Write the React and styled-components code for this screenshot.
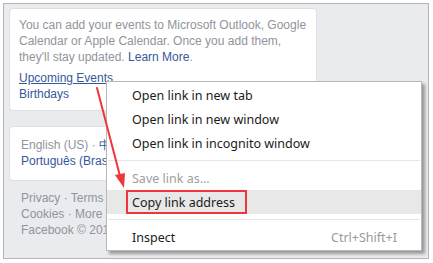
import React from "react";
import styled, { createGlobalStyle } from "styled-components";

const Global = createGlobalStyle`
  html, body { margin: 0; padding: 0; background: #ffffff; }
  body { font-family: "Liberation Sans", Arial, sans-serif; }
`;

const Frame = styled.div`
  position: relative;
  margin: 3px 0 0 3px;
  width: 419px;
  height: 250px;
  border: 1px solid #b4b4b4;
  background: #e9ebee;
  padding: 4px 0 0 5px;
  box-sizing: content-box;
  overflow: hidden;
  display: flex;
  flex-direction: column;
  align-items: flex-start;
`;

const Card = styled.div`
  width: 308px;
  box-sizing: border-box;
  background: #fff;
  border: 1px solid #dddfe2;
  border-radius: 4px;
  padding: ${(p) => p.$pad};
  margin-bottom: ${(p) => p.$mb || "0"};
  font-size: 12px;
  line-height: 16px;
  color: #90949c;
`;

const Para = styled.p`
  margin: 0 0 5px 0;
`;

const Link = styled.a`
  color: #365899;
  text-decoration: ${(p) => (p.$underline ? "underline" : "none")};
  display: ${(p) => (p.$block ? "block" : "inline")};
`;

const Footer = styled.div`
  padding-left: 12px;
  font-size: 12px;
  line-height: 16px;
  color: #90949c;
`;

const Menu = styled.div`
  position: absolute;
  left: 102px;
  top: 77px;
  width: 316px;
  box-sizing: border-box;
  background: #fff;
  border: 1px solid #b8b8b8;
  box-shadow: 3px 3px 3px rgba(0, 0, 0, 0.35);
  padding: 1px 0 1px 0;
  font-family: "Noto Sans", "Open Sans", sans-serif;
  font-size: 12.5px;
  color: #1a1a1a;
`;

const Item = styled.div`
  height: 24px;
  display: flex;
  align-items: center;
  justify-content: space-between;
  padding: 0 24px 0 25px;
  background: ${(p) => (p.$active ? "#e8e8e8" : "transparent")};
  color: ${(p) => (p.$disabled ? "#a0a0a0" : "#1a1a1a")};
`;

const Shortcut = styled.span`
  color: #9a9a9a;
`;

const Sep = styled.div`
  height: 11px;
  display: flex;
  align-items: center;
  &::after {
    content: "";
    flex: 1;
    height: 1px;
    margin: 0 1px;
    background: #e6e6e6;
  }
`;

const Boxed = styled.span`
  margin-left: -6px;
  height: 24px;
  box-sizing: border-box;
  display: flex;
  align-items: center;
  padding: 0 10px 0 4px;
  border: 2px solid #f0353b;
`;

const ArrowSvg = styled.svg`
  position: absolute;
  left: -4px;
  top: -4px;
  pointer-events: none;
`;

export default function App() {
  return (
    <>
      <Global />
      <Frame>
        <Card $pad="8px 8px 8px 9px" $mb="15px">
          <Para>
            You can add your events to Microsoft Outlook, Google Calendar or
            Apple Calendar. Once you add them, they'll stay updated.{" "}
            <Link>Learn More</Link>.
          </Para>
          <Link $block $underline>Upcoming Events</Link>
          <Link $block>Birthdays</Link>
        </Card>
        <Card $pad="10px 8px 11px 11px" $mb="9px">
          <div>
            English (US) · <Link>中文(简体)</Link> · <Link>Español</Link>
          </div>
          <Link $block>Português (Brasil)</Link>
        </Card>
        <Footer>
          <div>Privacy · Terms · Advertising · Ad Choices</div>
          <div>Cookies · More</div>
          <div>Facebook © 2018</div>
        </Footer>

        <Menu>
          <Item>Open link in new tab</Item>
          <Item>Open link in new window</Item>
          <Item>Open link in incognito window</Item>
          <Sep />
          <Item $disabled>Save link as...</Item>
          <Item $active>
            <Boxed>Copy link address</Boxed>
          </Item>
          <Sep />
          <Item>
            <span>Inspect</span>
            <Shortcut>Ctrl+Shift+I</Shortcut>
          </Item>
        </Menu>

        <ArrowSvg width="433" height="263" viewBox="0 0 433 263">
          <line x1="97" y1="88" x2="120" y2="176" stroke="#f0353b" strokeWidth="2" strokeLinecap="round" />
          <polygon points="124,188 115,175 125,173" fill="#f0353b" />
        </ArrowSvg>
      </Frame>
    </>
  );
}
